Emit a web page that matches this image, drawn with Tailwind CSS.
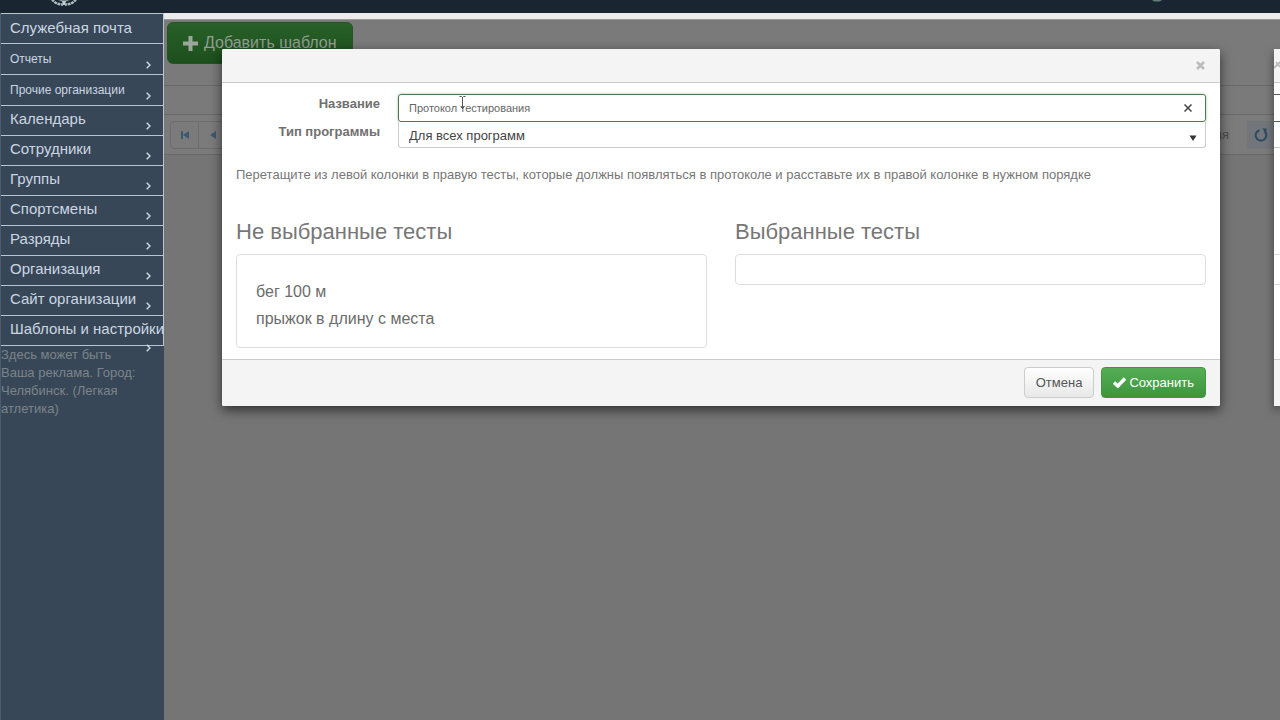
<!DOCTYPE html>
<html lang="ru">
<head>
    <meta charset="UTF-8">
    <meta name="viewport" content="width=device-width, initial-scale=1.0">
    <title>Шаблоны протоколов</title>
    <script src="https://cdn.jsdelivr.net/npm/@tailwindcss/browser@4"></script>
</head>
<body class="min-h-screen flex flex-col bg-[#757575] font-['Liberation_Sans',Arial,sans-serif] text-[13px] text-[#777] overflow-x-hidden">
    <header class="h-[13px] bg-[#192531] flex items-start justify-between pl-[50px] pr-[118px] overflow-hidden">
        <!-- Emblem -->
        <svg class="w-[28px] h-[6px]" viewBox="0 0 28 6" fill="none">
            <path d="M2 -1Q5 4.500 13 4.500M26 -1Q23 4.500 15 4.500" stroke="#b4bcc3" stroke-width="2.500" stroke-dasharray="3 0.700"/>
            <path d="M8 -1Q14 3 20 -1" stroke="#8b949c" stroke-width="1.500"/>
            <path d="M12 1h4l-1 4h-2z" fill="#c3c9ce"/>
        </svg>
        <svg class="w-[10px] h-[2px]" viewBox="0 0 10 2"><ellipse cx="5" cy="-1" rx="5" ry="2.500" fill="#5f7f74"/></svg>
    </header>

    <div class="flex flex-1">
        <aside class="w-[164px] shrink-0 bg-[#374757] border-l border-[#4b5c6d]">
            <nav>
                <ul class="border-y border-r border-[#b9c5d3] divide-y divide-[#b9c5d3] text-[15px] text-[#ccd6e2]">
                    <li><a href="#" class="flex h-[29px] items-center pl-[9px]">Служебная почта</a></li>
                    <li><a href="#" class="flex h-[30px] items-center justify-between pl-[9px] pr-3 text-xs">Отчеты
                        <svg class="w-[5px] h-2 mt-3" viewBox="0 0 5 8" fill="none" stroke="currentColor" stroke-width="1.500"><path d="M0.700 0.700L4 4 0.700 7.300"/></svg></a></li>
                    <li><a href="#" class="flex h-[30px] items-center justify-between pl-[9px] pr-3 text-xs">Прочие организации
                        <svg class="w-[5px] h-2 mt-3" viewBox="0 0 5 8" fill="none" stroke="currentColor" stroke-width="1.500"><path d="M0.700 0.700L4 4 0.700 7.300"/></svg></a></li>
                    <li><a href="#" class="flex h-[29px] items-center justify-between pb-0.5 pl-[9px] pr-3">Календарь
                        <svg class="w-[5px] h-2 mt-3" viewBox="0 0 5 8" fill="none" stroke="currentColor" stroke-width="1.500"><path d="M0.700 0.700L4 4 0.700 7.300"/></svg></a></li>
                    <li><a href="#" class="flex h-[29px] items-center justify-between pb-0.5 pl-[9px] pr-3">Сотрудники
                        <svg class="w-[5px] h-2 mt-3" viewBox="0 0 5 8" fill="none" stroke="currentColor" stroke-width="1.500"><path d="M0.700 0.700L4 4 0.700 7.300"/></svg></a></li>
                    <li><a href="#" class="flex h-[29px] items-center justify-between pb-0.5 pl-[9px] pr-3">Группы
                        <svg class="w-[5px] h-2 mt-3" viewBox="0 0 5 8" fill="none" stroke="currentColor" stroke-width="1.500"><path d="M0.700 0.700L4 4 0.700 7.300"/></svg></a></li>
                    <li><a href="#" class="flex h-[29px] items-center justify-between pb-0.5 pl-[9px] pr-3">Спортсмены
                        <svg class="w-[5px] h-2 mt-3" viewBox="0 0 5 8" fill="none" stroke="currentColor" stroke-width="1.500"><path d="M0.700 0.700L4 4 0.700 7.300"/></svg></a></li>
                    <li><a href="#" class="flex h-[29px] items-center justify-between pb-0.5 pl-[9px] pr-3">Разряды
                        <svg class="w-[5px] h-2 mt-3" viewBox="0 0 5 8" fill="none" stroke="currentColor" stroke-width="1.500"><path d="M0.700 0.700L4 4 0.700 7.300"/></svg></a></li>
                    <li><a href="#" class="flex h-[29px] items-center justify-between pb-0.5 pl-[9px] pr-3">Организация
                        <svg class="w-[5px] h-2 mt-3" viewBox="0 0 5 8" fill="none" stroke="currentColor" stroke-width="1.500"><path d="M0.700 0.700L4 4 0.700 7.300"/></svg></a></li>
                    <li><a href="#" class="flex h-[29px] items-center justify-between pb-0.5 pl-[9px] pr-3">Сайт организации
                        <svg class="w-[5px] h-2 mt-3" viewBox="0 0 5 8" fill="none" stroke="currentColor" stroke-width="1.500"><path d="M0.700 0.700L4 4 0.700 7.300"/></svg></a></li>
                    <li class="relative"><a href="#" class="flex h-[29px] items-center pb-0.5 pl-[9px] whitespace-nowrap">Шаблоны и настройки
                        <svg class="absolute right-3 top-7 w-[5px] h-2" viewBox="0 0 5 8" fill="none" stroke="currentColor" stroke-width="1.500"><path d="M0.700 0.700L4 4 0.700 7.300"/></svg></a></li>
                </ul>
            </nav>
            <p class="w-[136px] leading-[18px] text-[#7d838a]">Здесь может быть Ваша реклама. Город: Челябинск. (Легкая атлетика)</p>
        </aside>

        <main class="relative flex-1 min-w-0">
            <!-- Dimmed page -->
            <div class="h-[7px] bg-[#ececec] border-b border-[#999]"></div>
            <div class="pl-[3px] pt-0.5 pb-[21px] bg-[#7a7a7a]">
                <button type="button" class="flex items-center h-[42px] gap-1.5 px-[15px] rounded-md bg-linear-to-b from-[#286028] to-[#1d4f1d] border border-[#245424] text-base text-[#929f92]">
                    <svg class="w-[15px] h-[15px]" viewBox="0 0 15 15" fill="#9ba79b"><path d="M5.500 0h4v5.500H15v4H9.500V15h-4V9.500H0v-4h5.500z"/></svg>
                    Добавить шаблон
                </button>
            </div>
            <div class="h-[30px] border-y border-[#686868] bg-[#7a7a7a]"></div>
            <div class="flex items-center justify-between h-10 pl-1.5 pr-1.5 border-b border-[#686868] bg-[#7b7b7b]">
                <div class="flex border border-[#6c6c6c] rounded-sm text-[#3e5870]">
                    <button type="button" aria-label="Первая страница" class="flex items-center justify-center w-7 h-[26px] border-r border-[#6c6c6c]">
                        <svg class="w-2 h-2" viewBox="0 0 8 8" fill="currentColor"><path d="M0 0h2v8H0zM8 0v8L2 4z"/></svg>
                    </button>
                    <button type="button" aria-label="Предыдущая страница" class="flex items-center justify-center w-7 h-[26px]">
                        <svg class="w-1.5 h-2" viewBox="0 0 6 8" fill="currentColor"><path d="M6 0v8L0 4z"/></svg>
                    </button>
                </div>
                <div class="flex items-center gap-[18px] text-[#4b4b4b]">
                    Нет записей для отображения
                    <button type="button" aria-label="Обновить" class="flex items-center justify-center w-[27px] h-7 bg-[#72757a]">
                        <svg class="w-[14px] h-[14px]" viewBox="0 0 14 14" fill="none" stroke="#2d4864" stroke-width="2"><path d="M10.500 3.300A5.300 5.300 0 1 1 5.500 2.200"/><path d="M8 0.500h4.500V5z" fill="#2d4864" stroke="none"/></svg>
                    </button>
                </div>
            </div>

            <!-- Template dialog -->
            <form role="dialog" aria-label="Шаблон протокола" class="absolute top-9 left-[58px] right-[60px] bg-white rounded-xs shadow-[0_4px_12px_rgba(0,0,0,0.6)]">
                <div class="flex items-center justify-end h-[34px] px-[14px] bg-[#f4f4f4] border-b border-[#ccc] rounded-t-xs">
                    <button type="button" aria-label="Закрыть" class="p-px">
                        <svg class="w-[9px] h-[9px]" viewBox="0 0 9 9" stroke="#bcbcbc" stroke-width="2.500"><path d="M1 1l7 7M8 1L1 8"/></svg>
                    </button>
                </div>
                <div class="px-[14px] pt-[11px] pb-[11px]">
                    <div class="grid grid-cols-[144px_1fr] gap-x-[18px]">
                        <label for="name" class="text-right font-bold leading-5 text-[#707070]">Название</label>
                        <div class="relative">
                            <input id="name" type="text" value="Протокол тестирования" class="block w-full h-7 pl-[10px] pr-8 rounded-[3px] border border-[#4f7552] shadow-[0_0_3px_#9cc79c] text-[11px] text-[#666] outline-none">
                            <button type="button" aria-label="Очистить" class="absolute right-3 top-2 p-0.5">
                                <svg class="w-2 h-2" viewBox="0 0 8 8" stroke="#444" stroke-width="1.500"><path d="M0.500 0.500l7 7M7.500 0.500l-7 7"/></svg>
                            </button>
                            <!-- Text cursor -->
                            <svg class="absolute left-[61px] top-0.5 w-[7px] h-3.5" viewBox="0 0 7 14" fill="none" stroke="#555"><path d="M0.500 0.500h2l1 1 1-1h2M3.500 1v12M2 11.500h3"/></svg>
                        </div>
                        <label for="type" class="text-right font-bold leading-5 text-[#707070]">Тип программы</label>
                        <div class="relative">
                            <select id="type" class="block w-full h-[26px] pt-0.5 pl-[10px] pr-8 rounded-b-[3px] border border-t-0 border-[#ccc] bg-white appearance-none text-[13px] text-[#444] outline-none">
                                <option>Для всех программ</option>
                            </select>
                            <svg class="absolute right-[9px] top-[13px] w-2 h-1.5 pointer-events-none" viewBox="0 0 8 6" fill="#333"><path d="M0.500 0.500h7L4 6z"/></svg>
                        </div>
                    </div>
                    <p class="mt-[17px] leading-5">Перетащите из левой колонки в правую тесты, которые должны появляться в протоколе и расставьте их в правой колонке в нужном порядке</p>
                    <div class="grid grid-cols-2 gap-7 mt-[31px] items-start">
                        <section>
                            <h3 class="text-[22px] leading-8">Не выбранные тесты</h3>
                            <ul class="mt-1.5 px-[19px] pt-[23px] pb-[15px] border border-[#ddd] rounded text-base leading-[27px] text-[#6c6c6c]">
                                <li>бег 100 м</li>
                                <li>прыжок в длину с места</li>
                            </ul>
                        </section>
                        <section>
                            <h3 class="text-[22px] leading-8">Выбранные тесты</h3>
                            <ul class="mt-1.5 h-[31px] border border-[#ddd] rounded"></ul>
                        </section>
                    </div>
                </div>
                <div class="flex justify-end gap-[7px] px-[14px] pt-[7px] pb-2 bg-[#f4f4f4] border-t border-[#ccc] rounded-b-xs">
                    <button type="button" class="h-[31px] px-[11px] rounded border border-[#ccc] bg-linear-to-b from-white to-[#e8e8e8] text-[#555]">Отмена</button>
                    <button type="submit" class="flex items-center gap-[3px] h-[31px] px-[11px] rounded border border-[#419641] bg-linear-to-b from-[#55ae55] to-[#3d963d] text-white">
                        <svg class="w-[13px] h-[11px]" viewBox="0 0 13 11" fill="none" stroke="#fff" stroke-width="3.500"><path d="M1 5.500L4.800 9 12 1.500"/></svg>
                        Сохранить
                    </button>
                </div>
            </form>

            <!-- Edge of the next dialog -->
            <div class="absolute top-9 right-0 w-1.5 bg-white shadow-[0_4px_8px_rgba(0,0,0,0.5)]">
                <div class="h-[34px] bg-[#f4f4f4] border-b border-[#ccc] pt-3 overflow-hidden">
                    <svg class="w-1.5 h-2" viewBox="0 0 6 8" stroke="#bcbcbc" stroke-width="2"><path d="M0 7L6 1M2 1l4 5"/></svg>
                </div>
                <div class="mt-[11px] h-7 border-y border-[#4f5f50]"></div>
                <div class="h-[26px] border-b border-[#ccc]"></div>
                <div class="mt-[106px] h-[31px] border-y border-[#ddd]"></div>
                <div class="mt-[74px] h-[47px] bg-[#f4f4f4] border-t border-[#ccc]"></div>
            </div>
        </main>
    </div>
</body>
</html>
